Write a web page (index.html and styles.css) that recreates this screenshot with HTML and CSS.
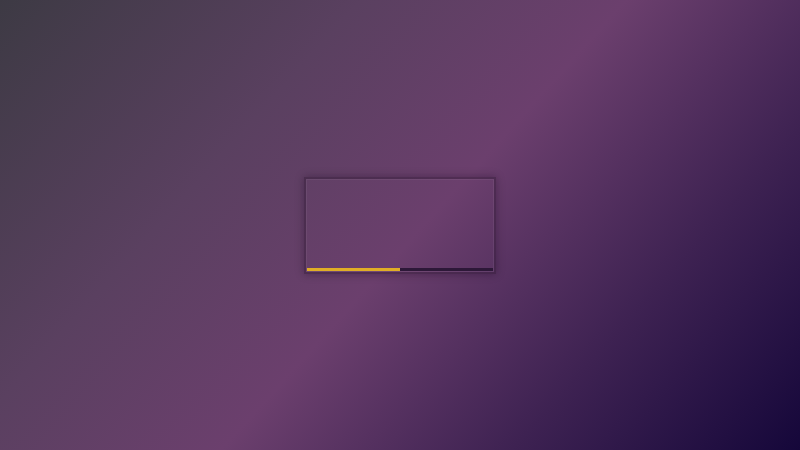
FILE: index.html
```html
<!DOCTYPE html>
<html>
<head>
<meta charset="utf-8">
<link rel="stylesheet" href="styles.css">
</head>
<body>
<div class="stage">
  <div class="loader">
    <div class="content"></div>
    <div class="track"><div class="fill" style="width:50%"></div></div>
  </div>
</div>
</body>
</html>
```
FILE: styles.css
```css
html, body {
  margin: 0;
  padding: 0;
  height: 100%;
}
body {
  font-family: "Liberation Sans", sans-serif;
  background: linear-gradient(132deg, #3d3a44 0%, #5a4060 30%, #6b3f6d 52%, #3e2252 76%, #15073a 100%);
  overflow: hidden;
}
.stage {
  width: 800px;
  height: 450px;
  display: flex;
  align-items: center;
  justify-content: center;
}
.loader {
  width: 188px;
  height: 93px;
  border: 2px solid rgba(40, 20, 45, 0.4);
  box-shadow: 0 0 8px rgba(20, 5, 25, 0.35), inset 0 0 0 1px rgba(255, 255, 255, 0.06);
  display: flex;
  flex-direction: column;
}
.content {
  flex: 1;
}
.track {
  height: 3px;
  background: #2d1838;
  margin: 0 1px 1px;
}
.fill {
  height: 100%;
  background: #e0ae26;
}
```
